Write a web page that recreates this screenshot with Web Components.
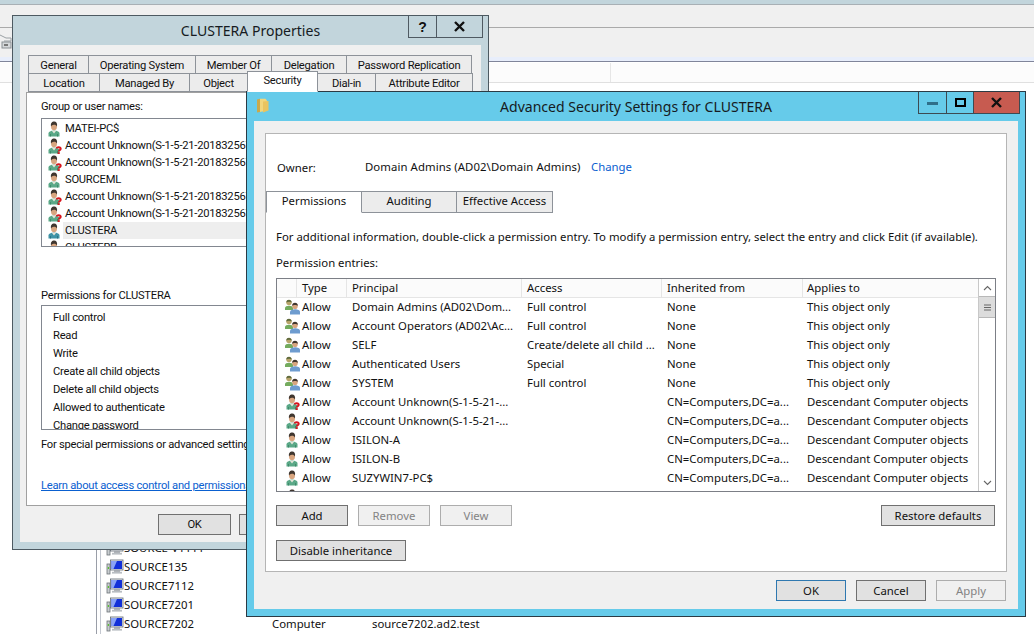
<!DOCTYPE html>
<html><head><meta charset="utf-8"><title>Advanced Security Settings</title>
<style>
html,body{margin:0;padding:0;width:1034px;height:634px;overflow:hidden;background:#fff}
body{font:11.35px/16px "Noto Sans","Open Sans",sans-serif;color:#111}
</style></head><body>
<x-desktop>
  <x-window style="left:12px;top:15px;width:477px;height:535px" tone="grey">
    <span slot="title">CLUSTERA Properties</span>
    <x-props></x-props>
  </x-window>
  <x-window style="left:246px;top:91px;width:780px;height:526px" tone="blue">
    <x-folder slot="icon"></x-folder>
    <span slot="title">Advanced Security Settings for CLUSTERA</span>
    <x-advanced></x-advanced>
  </x-window>
</x-desktop>
<script>
const ICONS={
 user:(b='#5aa887',b2='#3f8a6b')=>`<svg width="16" height="16" viewBox="0 0 16 16"><path d="M2.5 15.5V12.5C2.5 10.6 5 10 8 9.6C11 10 13.5 10.6 13.5 12.5V15.5Z" fill="${b}"/><path d="M6 10L8 12.5L10 10Z" fill="#e6e6da"/><path d="M4.5 15.5V13M11.5 15.5V13" stroke="${b2}"/><ellipse cx="8" cy="5.4" rx="3" ry="3.8" fill="#d8a57f"/><path d="M5 5.4C4.4 2 6.2 .6 8.2 .6C10.2 .6 11.6 2.2 11 5.4C10.2 3.9 9 3.5 7.8 3.7C6.6 3.8 5.6 4.3 5 5.4Z" fill="#3f362f"/></svg>`,
 q:`<path d="M10.6 10.4C10.8 8.8 14.6 8.6 14.7 10.7C14.7 12.2 12.7 12.2 12.7 13.6" fill="none" stroke="#d8141c" stroke-width="2"/><rect x="11.7" y="14.2" width="2" height="1.8" fill="#d8141c"/>`
};
ICONS.unknown=()=>ICONS.user().replace('</svg>',ICONS.q+'</svg>');
ICONS.selected=()=>ICONS.user('#3f93a6','#2c7385');
ICONS.group=()=>`<svg width="18" height="16" viewBox="0 0 18 16"><path d="M1 11V9C1 7.4 3 7 5 6.8C7 7 9 7.4 9 9V11Z" fill="#74ab5e"/><circle cx="5" cy="3.6" r="2.7" fill="#b9a56b"/><path d="M2.3 3.4C2.3 1.4 3.6.7 5 .7S7.7 1.6 7.7 3.4C6.4 2.4 3.6 2.4 2.3 3.4Z" fill="#5f6a3c"/><path d="M6 15.4V13C6 11 8.4 10.4 11 10.2C13.6 10.4 16 11 16 13V15.4Z" fill="#6e9ccf"/><ellipse cx="11" cy="7" rx="2.8" ry="3.1" fill="#d8a57f"/><path d="M8.2 6.8C8 4.6 9.6 3.7 11 3.7S14 4.6 13.8 6.8C12.6 5.8 9.4 5.8 8.2 6.8Z" fill="#3f362f"/></svg>`;
ICONS.computer=()=>`<svg width="18" height="16" viewBox="0 0 18 16"><rect x="1" y="5" width="3" height="10" fill="#c9cdd0" stroke="#6d7378" stroke-width=".8"/><rect x="1.8" y="8" width="1.2" height="2" fill="#59c22e"/><rect x="4.5" y="1" width="12.5" height="10" fill="#eef1f4" stroke="#5c6670" stroke-width=".8"/><path d="M5.5 2H16V10H5.5Z" fill="#1230d8"/><path d="M5.5 2H11L7.5 10H5.5Z" fill="#8aa4f6"/><rect x="8" y="11.5" width="6" height="1.2" fill="#8a9098"/><rect x="6" y="12.8" width="10" height="1.8" fill="#b8bdc2"/></svg>`;

function def(name,css,html){
 customElements.define(name,class extends HTMLElement{
  connectedCallback(){
   if(this.shadowRoot)return;
   const r=this.attachShadow({mode:'open'});
   r.innerHTML=`<style>${css}</style>`+(typeof html==='function'?html(this):html);
  }
 });
}
def('x-icon',':host{display:inline-flex;width:18px;height:16px;flex:none}svg{display:block}',
 h=>ICONS[h.getAttribute('kind')||'user']());
def('x-folder',':host{display:block;width:14px;height:16px}svg{display:block}',
 `<svg width="14" height="16" viewBox="0 0 14 16"><path d="M1 1.5L4 .8V14L1 14.6Z" fill="#c9a94a"/><path d="M4 .8H9.5L11 2.5V12.5L4 14Z" fill="#f1d67c"/><path d="M7 3.5L12.5 3V12.6L7 14.6Z" fill="#e9c45f"/></svg>`);
def('x-btn',`:host{display:inline-flex;align-items:center;justify-content:center;box-sizing:border-box;height:21px;width:72px;background:#e1e1e1;border:1px solid #707070;white-space:nowrap;flex:none;color:#111}
 :host([disabled]){background:#f0f0f0;border-color:#adadad;color:#838383}
 :host([primary]){border-color:#2f78b0}`,'<slot></slot>');
def('x-tab',`:host{display:flex;box-sizing:border-box;align-items:center;justify-content:center;height:19px;background:#f0f0f0;border:1px solid #8d9299;margin-right:-1px;white-space:nowrap;flex:none}
 :host([active]){background:#fff;border-bottom-color:#fff;position:relative;z-index:1}`,'<slot></slot>');
def('x-ctrl',`:host{display:flex;align-items:center;justify-content:center;box-sizing:border-box;height:22px;border:1px solid var(--cb);border-top:0;margin-left:-1px;font:bold 14px "Liberation Sans",sans-serif;color:#111}
 :host([red]){background:#c75b50}`,'<slot></slot>');
def('x-window',`:host{position:absolute;box-sizing:border-box;display:flex;flex-direction:column;border:1px solid #4d5a62;background:#c2d5dc;--cb:#4f5a62}
 :host([tone=blue]){background:#66cbea;border-color:#2b3a44;--cb:#3c4a52}
 .title{flex:none;display:flex;align-items:center;justify-content:center;box-sizing:border-box;height:29px;font-size:14.05px;color:#161b22;position:relative}
 .icon{position:absolute;left:9px;top:6px}
 .ctrls{position:absolute;right:5px;top:0;display:flex}
 .body{flex:1;min-height:0;margin:0 7px 7px;background:#f0f0f0;position:relative;overflow:hidden}
 :host([tone=blue]) .ctrls x-ctrl:nth-child(1){width:29px}
 :host([tone=blue]) .ctrls x-ctrl:nth-child(2){width:28px}
 :host([tone=blue]) .ctrls x-ctrl:nth-child(3){width:47px}
 :host([tone=grey]) .ctrls x-ctrl:nth-child(1){width:29px}
 :host([tone=grey]) .ctrls x-ctrl:nth-child(2){width:47px}`,
 h=>{const x='<svg width="13" height="11" viewBox="0 0 13 11"><path d="M2 1L11 10M11 1L2 10" stroke="#111" stroke-width="2.4"/></svg>';
  const blue=h.getAttribute('tone')==='blue';
  const c=blue?`<x-ctrl><svg width="11" height="4"><rect width="11" height="3" y="1" fill="#2f6f8a"/></svg></x-ctrl><x-ctrl><svg width="11" height="9"><rect x="1" y="1" width="9" height="7" fill="none" stroke="#000" stroke-width="2"/></svg></x-ctrl><x-ctrl red>${x}</x-ctrl>`
   :`<x-ctrl>?</x-ctrl><x-ctrl>${x}</x-ctrl>`;
  return `<div class="title"><div class="icon"><slot name="icon"></slot></div><slot name="title"></slot><div class="ctrls">${c}</div></div><div class="body"><slot></slot></div>`;});

def('x-scroll',`:host{display:flex;flex-direction:column;width:17px;flex:none;border-left:1px solid #c8c8c8;box-sizing:border-box;background:#fff}
 .b{height:17px;display:flex;align-items:center;justify-content:center;flex:none}
 .t{height:22px;background:#dcdcdc;border:solid #b8b8b8;border-width:1px 0;box-sizing:border-box;display:flex;align-items:center;justify-content:center;flex:none}
 .f{flex:1}`,
 `<div class="b"><svg width="9" height="6"><path d="M1 5L4.5 1.5L8 5" fill="none" stroke="#666" stroke-width="1.1"/></svg></div>
  <div class="t"><svg width="9" height="7"><path d="M1 1H8M1 3.5H8M1 6H8" stroke="#666"/></svg></div>
  <div class="f"></div>
  <div class="b"><svg width="9" height="6"><path d="M1 1L4.5 4.5L8 1" fill="none" stroke="#666" stroke-width="1.1"/></svg></div>`);

const COLS='20px 50px 175px 140px 141px 175px';
def('x-perm-head',`:host{display:grid;grid-template-columns:${COLS};height:19px;box-sizing:border-box;border-bottom:1px solid #e5e5e5;background:#fbfbfb;flex:none}
 div{border-right:1px solid #e5e5e5;padding-left:5px;line-height:17px;white-space:nowrap;overflow:hidden;box-sizing:border-box}
 div:nth-child(2){padding-left:7px}
 div:last-child{border:0;padding-left:4px}`,
 `<div></div><div>Type</div><div>Principal</div><div>Access</div><div>Inherited from</div><div>Applies to</div>`);
def('x-perm-row',`:host{display:grid;grid-template-columns:${COLS};height:19px;flex:none}
 div{padding-left:5px;line-height:18px;white-space:nowrap;overflow:hidden;box-sizing:border-box}
 div:nth-child(2){padding-left:7px}
 div:last-child{padding-left:4px}
 .i{padding:1px 0 0 2px;overflow:visible}`,
 h=>{const g=n=>h.getAttribute(n)||'';return `<div class="i"><x-icon kind="${g('icon')}"></x-icon></div><div>Allow</div><div>${g('p')}</div><div>${g('a')}</div><div>${g('f')}</div><div>${g('t')}</div>`;});

def('x-perm-table',`:host{display:flex;box-sizing:border-box;width:720px;height:214px;border:1px solid #7c7f86;flex:none;overflow:hidden;background:#fff}
 .m{flex:1;min-width:0;display:flex;flex-direction:column;overflow:hidden}`,
 ()=>{
  const G='None',OBJ='This object only',D='Descendant Computer objects',C='CN=Computers,DC=a...';
  const rows=[['group','Domain Admins (AD02\\Dom...','Full control',G,OBJ],['group','Account Operators (AD02\\Ac...','Full control',G,OBJ],['group','SELF','Create/delete all child ...',G,OBJ],['group','Authenticated Users','Special',G,OBJ],['group','SYSTEM','Full control',G,OBJ],
  ['unknown','Account Unknown(S-1-5-21-...','',C,D],['unknown','Account Unknown(S-1-5-21-...','',C,D],['user','ISILON-A','',C,D],['user','ISILON-B','',C,D],['user','SUZYWIN7-PC$','',C,D],['user','SOURCE-V1111','',C,D]];
  return `<div class="m"><x-perm-head></x-perm-head>${rows.map(r=>`<x-perm-row icon="${r[0]}" p="${r[1]}" a="${r[2]}" f="${r[3]}" t="${r[4]}"></x-perm-row>`).join('')}</div><x-scroll></x-scroll>`;
 });

def('x-advanced',`:host{display:flex;flex-direction:column;height:100%;box-sizing:border-box;padding:12px 11px 8px}
 .panel{flex:1;background:#fff;border:1px solid #b5b5b5;box-sizing:border-box;display:flex;flex-direction:column;min-height:0}
 .in{padding:0 11px 0 10px;display:flex;flex-direction:column}
 .owner{display:flex;margin-top:24px;height:18px;line-height:18px;white-space:nowrap;padding-left:11px}
 .owner .l{width:88px;padding-top:1px}.owner .v{width:216px;letter-spacing:.08px}.owner a{margin-left:10px;color:#0a60d0;text-decoration:none}
 .tabs{display:flex;margin-top:15px}
 .tabs x-tab{height:22px;padding-bottom:2px}
 .info{margin-top:15px;height:18px;line-height:18px;white-space:nowrap}
 .ent{margin-top:8px;height:18px;line-height:18px}
 .rowb{display:flex;gap:10px;margin-top:13px}
 .rowb .sp{flex:1}
 .dis{margin-top:14px}
 .foot{display:flex;justify-content:flex-end;gap:10px;padding:8px 1px 0 0;flex:none}`,
 `<div class="panel">
   <div class="owner"><span class="l">Owner:</span><span class="v">Domain Admins (AD02\\Domain Admins)</span><a>Change</a></div>
   <div class="tabs"><x-tab active style="width:96px">Permissions</x-tab><x-tab style="width:96px;background:#ececec">Auditing</x-tab><x-tab style="width:97px;background:#ececec">Effective Access</x-tab></div>
   <div class="in">
    <div class="info">For additional information, double-click a permission entry. To modify a permission entry, select the entry and click Edit (if available).</div>
    <div class="ent">Permission entries:</div>
    <x-perm-table style="margin-top:6px"></x-perm-table>
    <div class="rowb"><x-btn>Add</x-btn><x-btn disabled>Remove</x-btn><x-btn disabled>View</x-btn><span class="sp"></span><x-btn style="width:114px">Restore defaults</x-btn></div>
    <div class="dis"><x-btn style="width:130px">Disable inheritance</x-btn></div>
   </div>
  </div>
  <div class="foot"><x-btn primary style="width:70px">OK</x-btn><x-btn style="width:70px">Cancel</x-btn><x-btn disabled style="width:70px">Apply</x-btn></div>`);

def('x-props',`:host{display:flex;flex-direction:column;height:100%;box-sizing:border-box;padding:10px 6px 8px;font:11.2px/16px Roboto,sans-serif;letter-spacing:-.25px}
 .tabs{display:flex;padding-left:2px}
 .tabs x-tab{height:19px;background:#ececec;padding-top:2px}
 .r2{margin-top:-1px}
 .r2 x-tab[active]{background:#fff;height:21px;margin-top:-2px;margin-bottom:-1px;padding:0 0 1px}
 .panel{height:414px;flex:none;background:#fff;border:1px solid #a0a0a0;box-sizing:border-box;padding:6px 14px 0;overflow:hidden}
 .lab{height:16px;line-height:15px;white-space:nowrap}
 .box{border:1px solid #828790;width:420px;box-sizing:border-box;overflow:hidden}
 .users{height:129px;margin-top:3px;padding-top:1px}
 .u{display:flex;align-items:center;height:17px;white-space:nowrap;padding-left:3px}
 .u span{padding-left:2px;flex:1;line-height:17px}
 .u.sel span{background:#eee}
 .u x-icon{margin-left:1px;width:17px}
 .perm{height:125px;margin-top:1px;padding:3px 0 0 11px}
 .perm div{height:18px;line-height:18px;white-space:nowrap}
 .sp1{height:41px}
 .note{margin-top:7px;height:16px;line-height:15px;white-space:nowrap}
 .link{margin-top:25px;height:16px;line-height:15px;color:#0a60d0;text-decoration:underline;white-space:nowrap}
 .foot{display:flex;gap:8px;padding:8px 0 0 132px}`,
 ()=>{
  const A='Account Unknown(S-1-5-21-2018325678-1412567890-3387645123-1104)';
  const us=[['user','MATEI-PC$'],['unknown',A],['unknown',A],['user','SOURCEML'],['unknown',A],['unknown',A],['selected','CLUSTERA'],['user','CLUSTERB']];
  const ps=['Full control','Read','Write','Create all child objects','Delete all child objects','Allowed to authenticate','Change password'];
  return `<div class="tabs"><x-tab style="width:61px">General</x-tab><x-tab style="width:108px">Operating System</x-tab><x-tab style="width:77px">Member Of</x-tab><x-tab style="width:76px">Delegation</x-tab><x-tab style="width:126px">Password Replication</x-tab></div>
  <div class="tabs r2"><x-tab style="width:72px">Location</x-tab><x-tab style="width:91px">Managed By</x-tab><x-tab style="width:59px">Object</x-tab><x-tab active style="width:71px">Security</x-tab><x-tab style="width:59px">Dial-in</x-tab><x-tab style="width:98px">Attribute Editor</x-tab></div>
  <div class="panel"><div class="lab">Group or user names:</div>
   <div class="box users">${us.map(u=>`<div class="u ${u[0]==='selected'?'sel':''}"><x-icon kind="${u[0]}"></x-icon><span>${u[1]}</span></div>`).join('')}</div>
   <div class="sp1"></div>
   <div class="lab">Permissions for CLUSTERA</div>
   <div class="box perm">${ps.map(p=>`<div>${p}</div>`).join('')}</div>
   <div class="note">For special permissions or advanced settings, click Advanced.</div>
   <div class="link">Learn about access control and permissions</div>
  </div>
  <div class="foot"><x-btn style="width:73px">OK</x-btn><x-btn style="width:73px">Cancel</x-btn><x-btn disabled style="width:73px">Apply</x-btn></div>`;
 });

def('x-desktop',`:host{display:block;position:relative;width:1034px;height:634px;overflow:hidden;background:#fff}
 .strip{height:4px;background:#c2d5dc;border-bottom:1px solid #a8b0b5}
 .tb1{height:22px;background:#f0f0f0;border-bottom:1px solid #aaa}
 .tb2{height:29px;background:#f0f0f0;padding-top:3px;box-sizing:border-box;overflow:hidden}
 .tint{height:4px;background:#e8eefb;border-bottom:1px solid #80859a}
 .tabs{height:19px;background:#fcfcfc;border-bottom:1px solid #e0e0e0;display:flex;margin-top:1px}
 .tabs i{display:block;width:610px;border-right:1px solid #e6e6e6}
 .main{display:flex;height:551px}
 .left{width:96px;border-right:1px solid #9a9ea8;flex:none}
 .list{margin-left:3px;border-left:1px solid #c4c8d0;padding:456px 0 0 5px;flex:1}
 .r{display:flex;height:19px;line-height:18px;white-space:nowrap}
 .r x-icon{margin-top:1px}
 .r .n{width:148px}.r .t{width:100px}`,
 ()=>{
  const rows=['SOURCE-V1111','SOURCE135','SOURCE7112','SOURCE7201','SOURCE7202'];
  return `<div class="strip"></div><div class="tb1"></div><div class="tb2"><svg width="12" height="18" viewBox="0 0 12 18"><path d="M0 4L6 7H11V10H4" fill="none" stroke="#9aa0a4"/><rect x="2" y="11" width="9" height="6" fill="#d5d8da" stroke="#8a9094"/><rect x="4" y="13" width="4" height="2" fill="#777"/></svg></div><div class="tint"></div>
  <div class="tabs"><i></i></div>
  <div class="main"><div class="left"></div><div class="list">${rows.map(n=>`<div class="r"><x-icon kind="computer"></x-icon><span class="n">${n}</span><span class="t">Computer</span><span>${n.toLowerCase()}.ad2.test</span></div>`).join('')}</div></div>
  <slot></slot>`;
 });
</script>
</body></html>
